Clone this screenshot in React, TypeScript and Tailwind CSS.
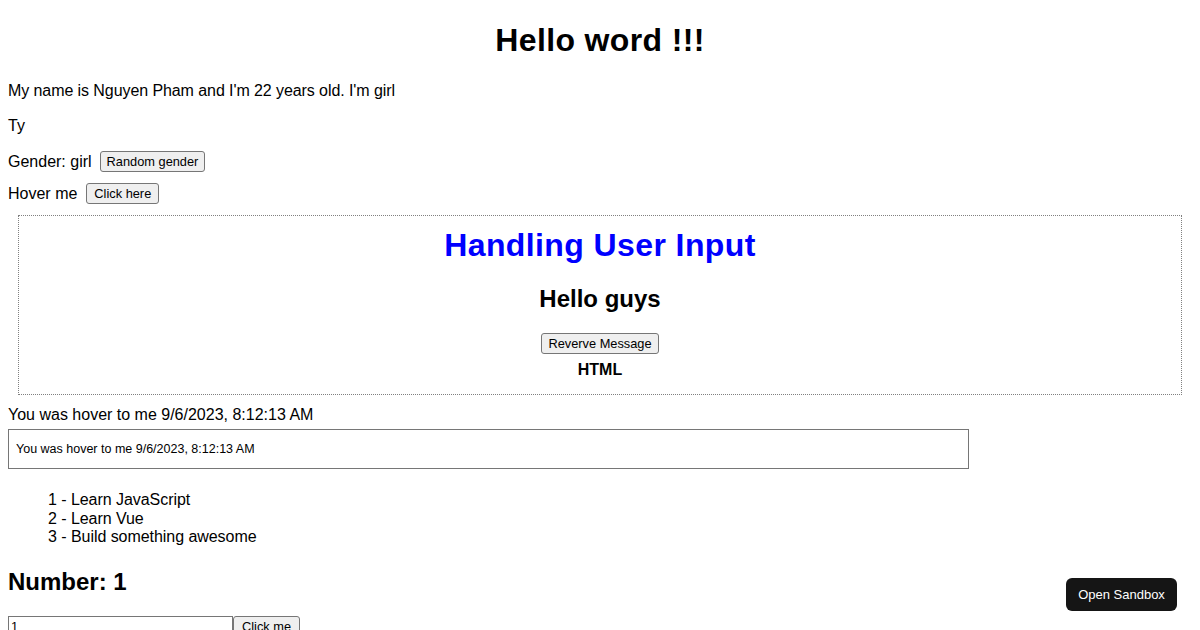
import React from "react";

const btn =
  "h-[21px] px-[6px] border border-[#767676] rounded-[3px] bg-[#efefef] text-black text-[12.8px] leading-[19px] font-['Liberation_Sans',Arial,sans-serif]";

export default function App() {
  return (
    <div className="relative min-h-[630px] bg-white flex flex-col px-[8px] font-['Liberation_Sans',Arial,sans-serif] text-black text-[16px]">
      <h1 className="mt-[22px] text-[32px] leading-[37px] font-bold text-center tracking-[0.35px]">Hello word !!!</h1>
      <p className="mt-[23px] leading-[18px] tracking-[-0.08px]">My name is Nguyen Pham and I'm 22 years old. I'm girl</p>
      <p className="mt-[17px] leading-[18px]">Ty</p>
      <div className="mt-[16px] h-[21px] flex items-center">
        <span className="leading-[18px]">Gender: girl</span>
        <button className={btn + " ml-[8px]"}>Random gender</button>
      </div>
      <div className="mt-[11px] h-[21px] flex items-center">
        <span className="leading-[18px]">Hover me</span>
        <button className={btn + " ml-[9px] px-[7px]"}>Click here</button>
      </div>
      <div className="mt-[11px] mx-[10px] border border-dotted border-[#808080] flex flex-col items-center pb-[15px]">
        <h1 className="mt-[11px] text-[32px] leading-[37px] font-bold text-[#0000ff] tracking-[0.4px]">Handling User Input</h1>
        <h2 className="mt-[21px] text-[24px] leading-[28px] font-bold">Hello guys</h2>
        <button className={btn + " mt-[20px]"}>Reverve Message</button>
        <b className="mt-[7px] leading-[18px] font-bold">HTML</b>
      </div>
      <p className="mt-[11px] leading-[18px]">You was hover to me 9/6/2023, 8:12:13 AM</p>
      <input
        readOnly
        value="You was hover to me 9/6/2023, 8:12:13 AM"
        className="mt-[5px] w-[961px] h-[40px] border border-[#767676] pl-[7px] text-[12.5px] text-black font-['Liberation_Sans',Arial,sans-serif] outline-none"
      />
      <ul className="mt-[22px] pl-[40px] leading-[18.7px] list-none tracking-[-0.05px]">
        <li>1 - Learn JavaScript</li>
        <li>2 - Learn Vue</li>
        <li>3 - Build something awesome</li>
      </ul>
      <h2 className="mt-[21px] text-[24px] leading-[28px] font-bold">Number: 1</h2>
      <div className="mt-[20px] flex items-start">
        <input
          readOnly
          value="1"
          className="w-[225px] h-[21px] border border-[#767676] pl-[2px] text-[12.8px] text-black font-['Liberation_Sans',Arial,sans-serif] outline-none"
        />
        <button className={btn + " px-[8px]"}>Click me</button>
      </div>
      <button className="fixed right-[23px] bottom-[19px] w-[111px] h-[33px] rounded-[6px] bg-[#151515] text-white text-[13px] font-['Liberation_Sans',Arial,sans-serif]">
        Open Sandbox
      </button>
    </div>
  );
}
